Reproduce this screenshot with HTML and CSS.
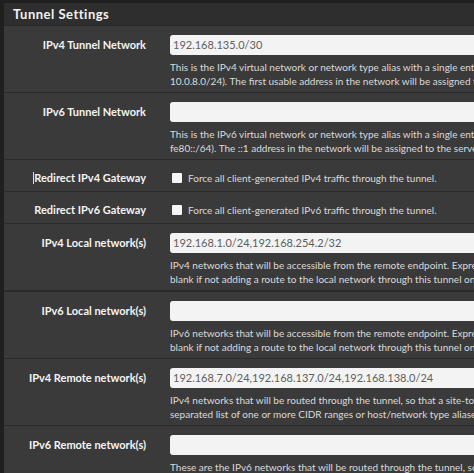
FILE: index.html
```html
<!DOCTYPE html>
<html>
<head>
<meta charset="utf-8">
<link rel="stylesheet" href="styles.css">
</head>
<body>
<div class="page">
  <div class="panel">
    <div class="panel-heading">Tunnel Settings</div>
    <div class="row">
      <div class="label">IPv4 Tunnel Network</div>
      <div class="field">
        <div class="input">192.168.135.0/30</div>
        <div class="help">This is the IPv4 virtual network or network type alias with a single entry used for private communications between this server and client hosts expressed using CIDR notation (e.g.<br>10.0.8.0/24). The first usable address in the network will be assigned to the server virtual interface.</div>
      </div>
    </div>
    <div class="row">
      <div class="label">IPv6 Tunnel Network</div>
      <div class="field">
        <div class="input"></div>
        <div class="help">This is the IPv6 virtual network or network type alias with a single entry used for private communications between this server and client hosts expressed using CIDR notation (e.g.<br>fe80::/64). The ::1 address in the network will be assigned to the server virtual interface.</div>
      </div>
    </div>
    <div class="row row-check">
      <div class="label"><span class="cursor"></span>Redirect IPv4 Gateway</div>
      <div class="field check">
        <span class="box"></span>
        <span class="check-text">Force all client-generated IPv4 traffic through the tunnel.</span>
      </div>
    </div>
    <div class="row row-check">
      <div class="label">Redirect IPv6 Gateway</div>
      <div class="field check">
        <span class="box"></span>
        <span class="check-text">Force all client-generated IPv6 traffic through the tunnel.</span>
      </div>
    </div>
    <div class="row row-thick">
      <div class="label">IPv4 Local network(s)</div>
      <div class="field">
        <div class="input">192.168.1.0/24,192.168.254.2/32</div>
        <div class="help">IPv4 networks that will be accessible from the remote endpoint. Expressed as a comma-separated list of one or more CIDR ranges or host/network type aliases. This may be left<br>blank if not adding a route to the local network through this tunnel on the remote machine.</div>
      </div>
    </div>
    <div class="row">
      <div class="label">IPv6 Local network(s)</div>
      <div class="field">
        <div class="input"></div>
        <div class="help">IPv6 networks that will be accessible from the remote endpoint. Expressed as a comma-separated list of one or more IP/PREFIX or host/network type aliases. This may be left<br>blank if not adding a route to the local network through this tunnel on the remote machine.</div>
      </div>
    </div>
    <div class="row">
      <div class="label">IPv4 Remote network(s)</div>
      <div class="field">
        <div class="input">192.168.7.0/24,192.168.137.0/24,192.168.138.0/24</div>
        <div class="help">IPv4 networks that will be routed through the tunnel, so that a site-to-site VPN can be established without manually changing the routing tables. Expressed as a comma-<br>separated list of one or more CIDR ranges or host/network type aliases.</div>
      </div>
    </div>
    <div class="row">
      <div class="label">IPv6 Remote network(s)</div>
      <div class="field">
        <div class="input"></div>
        <div class="help">These are the IPv6 networks that will be routed through the tunnel, so that a site-to-site VPN can be established without manually changing the routing tables.<br>Expressed as a comma-separated list of one or more IP/PREFIX or host/network type aliases.</div>
      </div>
    </div>
  </div>
</div>
</body>
</html>
```
FILE: styles.css
```css
html, body {
  margin: 0;
  padding: 0;
  background: #1f1f1f;
  overflow: hidden;
}
body {
  font-family: "Lato", "Open Sans", sans-serif;
  color: #e6e6e6;
}
.page {
  width: 474px;
  height: 473px;
  overflow: hidden;
  padding-top: 3px;
  box-sizing: border-box;
}
.panel {
  margin-left: 4px;
  width: 900px;
  background: #3a3a3a;
}
.panel-heading {
  background: #2e2e2e;
  height: 22px;
  line-height: 22px;
  padding-left: 9px;
  font-size: 13px;
  font-weight: bold;
  letter-spacing: 0.5px;
  color: #f2f2f2;
  border-bottom: 1px solid #282828;
}
.row {
  display: flex;
  padding: 9px 0 4px 0;
  border-bottom: 1px solid #2b2b2b;
}
.row-thick {
  border-bottom: 2px solid #2b2b2b;
}
.row-check {
  padding: 10px 0 5px 0;
}
.label {
  width: 142px;
  flex: none;
  text-align: right;
  font-size: 11px;
  font-weight: bold;
  line-height: 20px;
  color: #f4f4f4;
  position: relative;
}
.row-check .label {
  line-height: 16px;
}
.cursor {
  display: inline-block;
  width: 1px;
  height: 12px;
  background: #dcdcdc;
  vertical-align: -2px;
}
.field {
  margin-left: 24px;
  flex: 1;
}
.input {
  height: 20px;
  box-sizing: border-box;
  background: #f3f3f3;
  border-radius: 3px;
  font-size: 11px;
  line-height: 20px;
  padding-left: 3px;
  color: #5e5e5e;
}
.help {
  margin-top: 5px;
  font-size: 10px;
  line-height: 14px;
  color: #dadada;
  white-space: nowrap;
}
.check {
  display: flex;
  align-items: center;
  height: 16px;
  padding-left: 2px;
}
.box {
  width: 10px;
  height: 10px;
  background: #f5f5f5;
  border-radius: 1px;
  flex: none;
}
.check-text {
  margin-left: 6px;
  font-size: 10px;
  color: #dadada;
  white-space: nowrap;
}
```
